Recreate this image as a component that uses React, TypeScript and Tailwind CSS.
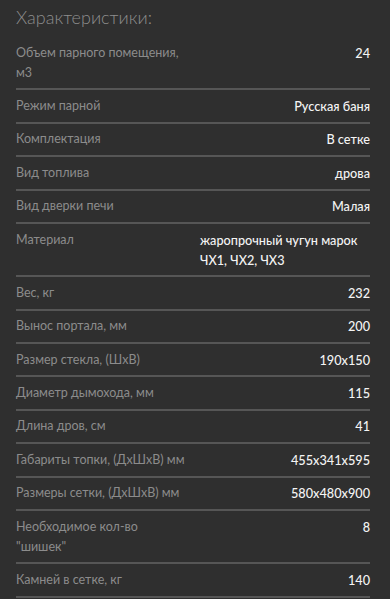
const rows: { label: string; value: string }[] = [
  { label: 'Объем парного помещения, м3', value: '24' },
  { label: 'Режим парной', value: 'Русская баня' },
  { label: 'Комплектация', value: 'В сетке' },
  { label: 'Вид топлива', value: 'дрова' },
  { label: 'Вид дверки печи', value: 'Малая' },
  { label: 'Материал', value: 'жаропрочный чугун марок ЧХ1, ЧХ2, ЧХ3' },
  { label: 'Вес, кг', value: '232' },
  { label: 'Вынос портала, мм', value: '200' },
  { label: 'Размер стекла, (ШхВ)', value: '190x150' },
  { label: 'Диаметр дымохода, мм', value: '115' },
  { label: 'Длина дров, см', value: '41' },
  { label: 'Габариты топки, (ДхШхВ) мм', value: '455x341x595' },
  { label: 'Размеры сетки, (ДхШхВ) мм', value: '580x480x900' },
  { label: 'Необходимое кол-во "шишек"', value: '8' },
  { label: 'Камней в сетке, кг', value: '140' },
];

export default function App() {
  return (
    <div
      className="min-h-screen w-full bg-[#2f2f2f] pl-4 pr-5"
      style={{ fontFamily: 'Lato, "Noto Sans", sans-serif' }}
    >
      <h2 className="pt-[4px] pb-[7px] text-[18px] leading-[26px] font-light text-[#8d8d8d]">
        Характеристики:
      </h2>
      <dl>
        {rows.map((r) => (
          <div
            key={r.label}
            className="flex items-start border-b-2 border-[#565656] py-[5.7px] leading-[20px]"
          >
            <dt className="w-[170px] shrink-0 text-[12.5px] text-[#8c8c8c]">{r.label}</dt>
            <dd className="ml-auto max-w-[170px] text-left text-[12.7px] font-medium text-[#f4f4f4]">
              {r.value}
            </dd>
          </div>
        ))}
      </dl>
    </div>
  );
}
